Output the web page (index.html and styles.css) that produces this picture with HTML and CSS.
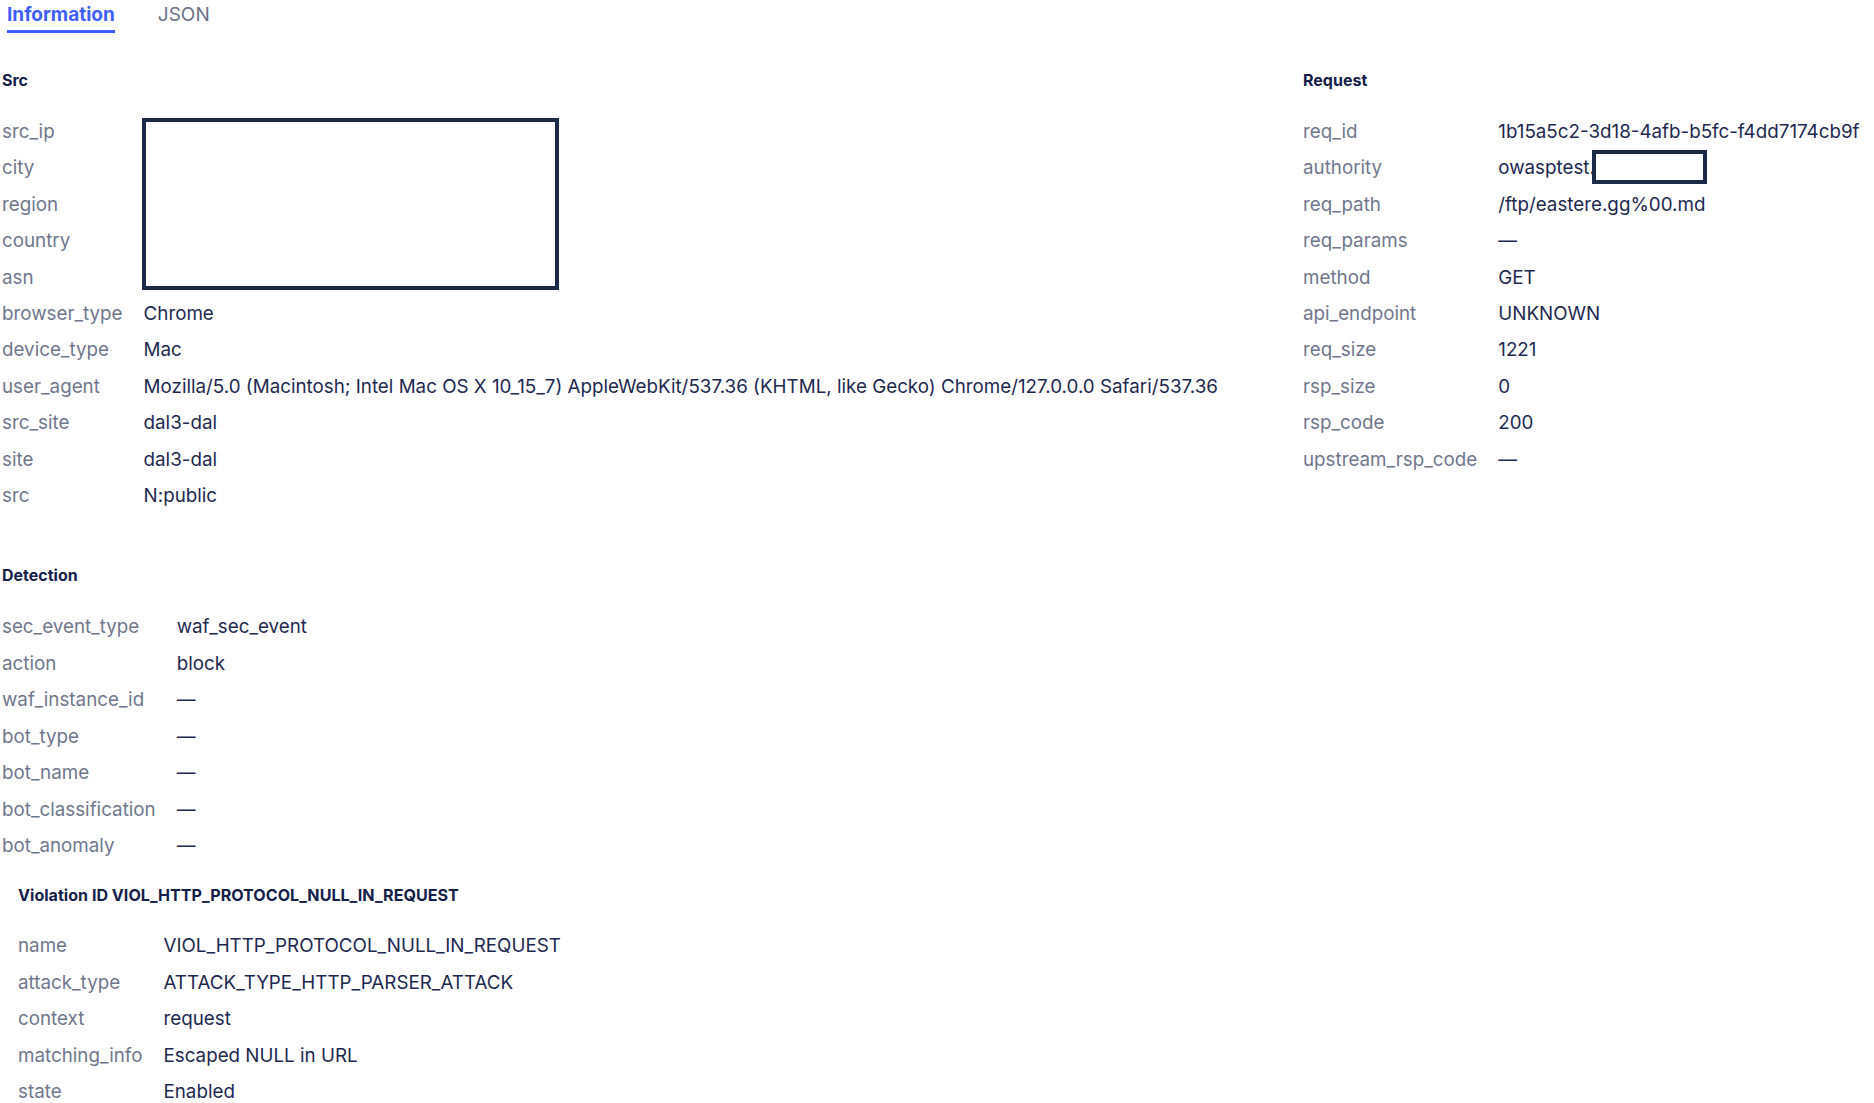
FILE: index.html
```html
<!DOCTYPE html>
<html lang="en">
<head>
<meta charset="utf-8">
<title>Security event</title>
<link rel="stylesheet" href="styles.css">
</head>
<body>
<div class="tabs">
  <div class="tab active">Information</div>
  <div class="tab">JSON</div>
</div>

<div class="top">
  <section class="block">
    <h3 class="heading">Src</h3>
    <div class="kv">
      <div class="k">src_ip</div><div class="redact"></div>
      <div class="k">city</div>
      <div class="k">region</div>
      <div class="k">country</div>
      <div class="k">asn</div>
      <div class="k">browser_type</div><div class="v">Chrome</div>
      <div class="k">device_type</div><div class="v">Mac</div>
      <div class="k">user_agent</div><div class="v">Mozilla/5.0 (Macintosh; Intel Mac OS X 10_15_7) AppleWebKit/537.36 (KHTML, like Gecko) Chrome/127.0.0.0 Safari/537.36</div>
      <div class="k">src_site</div><div class="v">dal3-dal</div>
      <div class="k">site</div><div class="v">dal3-dal</div>
      <div class="k">src</div><div class="v">N:public</div>
    </div>
  </section>

  <section class="block">
    <h3 class="heading">Request</h3>
    <div class="kv">
      <div class="k">req_id</div><div class="v">1b15a5c2-3d18-4afb-b5fc-f4dd7174cb9f</div>
      <div class="k">authority</div><div class="v">owasptest.<span class="redact-inline"></span></div>
      <div class="k">req_path</div><div class="v">/ftp/eastere.gg%00.md</div>
      <div class="k">req_params</div><div class="v">—</div>
      <div class="k">method</div><div class="v">GET</div>
      <div class="k">api_endpoint</div><div class="v">UNKNOWN</div>
      <div class="k">req_size</div><div class="v">1221</div>
      <div class="k">rsp_size</div><div class="v">0</div>
      <div class="k">rsp_code</div><div class="v">200</div>
      <div class="k">upstream_rsp_code</div><div class="v">—</div>
    </div>
  </section>
</div>

<section class="block detection">
  <h3 class="heading">Detection</h3>
  <div class="kv">
    <div class="k">sec_event_type</div><div class="v">waf_sec_event</div>
    <div class="k">action</div><div class="v">block</div>
    <div class="k">waf_instance_id</div><div class="v">—</div>
    <div class="k">bot_type</div><div class="v">—</div>
    <div class="k">bot_name</div><div class="v">—</div>
    <div class="k">bot_classification</div><div class="v">—</div>
    <div class="k">bot_anomaly</div><div class="v">—</div>
  </div>
</section>

<section class="block violation">
  <h4 class="heading sub">Violation ID VIOL_HTTP_PROTOCOL_NULL_IN_REQUEST</h4>
  <div class="kv">
    <div class="k">name</div><div class="v">VIOL_HTTP_PROTOCOL_NULL_IN_REQUEST</div>
    <div class="k">attack_type</div><div class="v">ATTACK_TYPE_HTTP_PARSER_ATTACK</div>
    <div class="k">context</div><div class="v">request</div>
    <div class="k">matching_info</div><div class="v">Escaped NULL in URL</div>
    <div class="k">state</div><div class="v">Enabled</div>
  </div>
</section>
</body>
</html>
```

FILE: styles.css
```css
html, body {
  margin: 0;
  padding: 0;
  background: #ffffff;
}

body {
  font-family: Inter, "Noto Sans", sans-serif;
  color: #1e2a50;
  overflow: hidden;
  height: 1103px;
}

.tabs {
  display: flex;
  gap: 43px;
  padding-left: 7px;
  height: 34px;
}

.tab {
  font-size: 19px;
  line-height: 30px;
  color: #6b7388;
  border-bottom: 3px solid transparent;
  height: 30px;
}

.tab.active {
  color: #3f5efb;
  font-weight: 650;
  border-bottom-color: #3f5efb;
}

.top {
  display: grid;
  grid-template-columns: 1301px 1fr;
}

.block {
  padding-left: 2px;
}

.heading {
  margin: 0;
  font-size: 16px;
  font-weight: 700;
  color: #15204a;
  line-height: 20px;
  padding-top: 36px;
  padding-bottom: 24px;
}

.kv {
  display: grid;
  grid-template-columns: max-content 1fr;
  column-gap: 21px;
  font-size: 18.8px;
  line-height: 36.4px;
}

.k {
  color: #6f778d;
  grid-column: 1;
  white-space: nowrap;
}

.v {
  grid-column: 2;
  white-space: nowrap;
  color: #1d2951;
}

.redact {
  grid-column: 2;
  grid-row: 1 / span 5;
  box-sizing: border-box;
  width: 417px;
  margin: 4px 0 6px -2px;
  border: 4px solid #1b2a47;
}

.redact-inline {
  display: inline-block;
  box-sizing: border-box;
  width: 115px;
  height: 34px;
  border: 4px solid #1b2a47;
  vertical-align: middle;
  margin-left: -3px;
  margin-top: -4px;
}

.detection .heading {
  padding-top: 51px;
}

.violation {
  padding-left: 18px;
}

.violation .heading {
  font-size: 16.1px;
  padding-top: 21px;
  padding-bottom: 23px;
}
```
